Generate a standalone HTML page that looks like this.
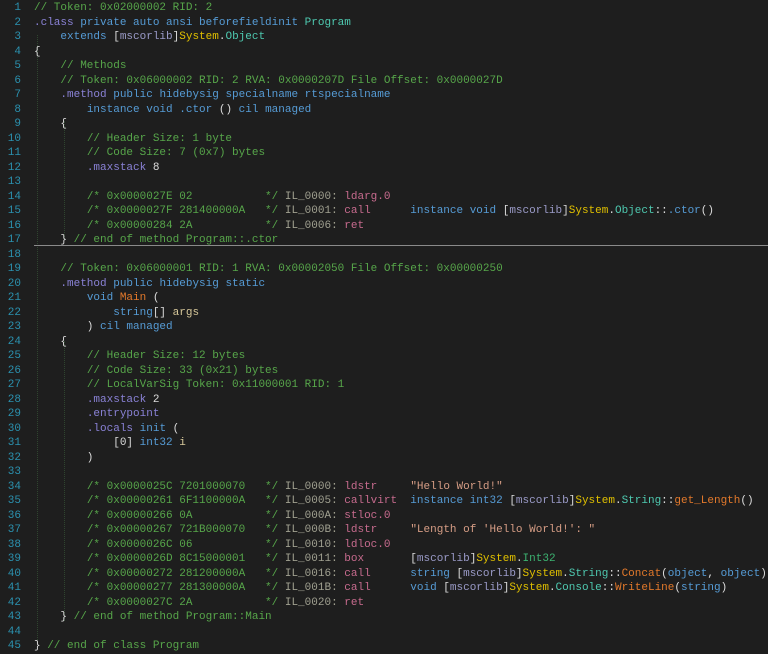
<!DOCTYPE html>
<html><head><style>
body{margin:0;background:#1e1e1e;width:768px;height:652px;overflow:hidden;position:relative;font-family:"Liberation Mono",monospace;font-size:11px;}
.l{position:absolute;left:0;height:14.5px;line-height:14.5px;white-space:pre;color:#dcdcdc;}
.n{display:inline-block;width:21px;text-align:right;color:#2b91af;margin-right:13px;}
.c{color:#57a64a}.d{color:#8a82d6}.k{color:#569cd6}.m{color:#9b9bc8}.s{color:#e0c000}.t{color:#4ec9b0}
.o{color:#c76b8e}.g{color:#a0a090}.f{color:#e3792b}.q{color:#d69d85}.v{color:#3cb371}.p{color:#d7c89a}.u{color:#b5cea8}
.gl{position:absolute;border-left:1px dotted #2f452f;}
</style></head><body>
<div class="gl" style="left:37px;top:35px;height:605px"></div>
<div class="gl" style="left:64px;top:121px;height:118px"></div>
<div class="gl" style="left:64px;top:341px;height:280px"></div>
<div style="position:absolute;left:34px;top:245px;width:734px;height:1px;background:#8a8a8a"></div>
<div id="c"></div>
<script>
const L=[
'<span class="c">// Token: 0x02000002 RID: 2</span>',
'<span class="d">.class</span> <span class="k">private auto ansi beforefieldinit</span> <span class="t">Program</span>',
'    <span class="k">extends</span> [<span class="m">mscorlib</span>]<span class="s">System</span>.<span class="t">Object</span>',
'{',
'    <span class="c">// Methods</span>',
'    <span class="c">// Token: 0x06000002 RID: 2 RVA: 0x0000207D File Offset: 0x0000027D</span>',
'    <span class="d">.method</span> <span class="k">public hidebysig specialname rtspecialname</span>',
'        <span class="k">instance void</span> <span class="k">.ctor</span> () <span class="k">cil managed</span>',
'    {',
'        <span class="c">// Header Size: 1 byte</span>',
'        <span class="c">// Code Size: 7 (0x7) bytes</span>',
'        <span class="d">.maxstack</span> 8',
'',
'        <span class="c">/* 0x0000027E 02           */</span> <span class="g">IL_0000:</span> <span class="o">ldarg.0</span>',
'        <span class="c">/* 0x0000027F 281400000A   */</span> <span class="g">IL_0001:</span> <span class="o">call</span>      <span class="k">instance void</span> [<span class="m">mscorlib</span>]<span class="s">System</span>.<span class="t">Object</span>::<span class="k">.ctor</span>()',
'        <span class="c">/* 0x00000284 2A           */</span> <span class="g">IL_0006:</span> <span class="o">ret</span>',
'    } <span class="c">// end of method Program::.ctor</span>',
'',
'    <span class="c">// Token: 0x06000001 RID: 1 RVA: 0x00002050 File Offset: 0x00000250</span>',
'    <span class="d">.method</span> <span class="k">public hidebysig static</span>',
'        <span class="k">void</span> <span class="f">Main</span> (',
'            <span class="k">string</span>[] <span class="p">args</span>',
'        ) <span class="k">cil managed</span>',
'    {',
'        <span class="c">// Header Size: 12 bytes</span>',
'        <span class="c">// Code Size: 33 (0x21) bytes</span>',
'        <span class="c">// LocalVarSig Token: 0x11000001 RID: 1</span>',
'        <span class="d">.maxstack</span> 2',
'        <span class="d">.entrypoint</span>',
'        <span class="d">.locals</span> <span class="k">init</span> (',
'            [0] <span class="k">int32</span> <span class="p">i</span>',
'        )',
'',
'        <span class="c">/* 0x0000025C 7201000070   */</span> <span class="g">IL_0000:</span> <span class="o">ldstr</span>     <span class="q">"Hello World!"</span>',
'        <span class="c">/* 0x00000261 6F1100000A   */</span> <span class="g">IL_0005:</span> <span class="o">callvirt</span>  <span class="k">instance int32</span> [<span class="m">mscorlib</span>]<span class="s">System</span>.<span class="t">String</span>::<span class="f">get_Length</span>()',
'        <span class="c">/* 0x00000266 0A           */</span> <span class="g">IL_000A:</span> <span class="o">stloc.0</span>',
'        <span class="c">/* 0x00000267 721B000070   */</span> <span class="g">IL_000B:</span> <span class="o">ldstr</span>     <span class="q">"Length of \'Hello World!\': "</span>',
'        <span class="c">/* 0x0000026C 06           */</span> <span class="g">IL_0010:</span> <span class="o">ldloc.0</span>',
'        <span class="c">/* 0x0000026D 8C15000001   */</span> <span class="g">IL_0011:</span> <span class="o">box</span>       [<span class="m">mscorlib</span>]<span class="s">System</span>.<span class="v">Int32</span>',
'        <span class="c">/* 0x00000272 281200000A   */</span> <span class="g">IL_0016:</span> <span class="o">call</span>      <span class="k">string</span> [<span class="m">mscorlib</span>]<span class="s">System</span>.<span class="t">String</span>::<span class="f">Concat</span>(<span class="k">object</span>, <span class="k">object</span>)',
'        <span class="c">/* 0x00000277 281300000A   */</span> <span class="g">IL_001B:</span> <span class="o">call</span>      <span class="k">void</span> [<span class="m">mscorlib</span>]<span class="s">System</span>.<span class="t">Console</span>::<span class="f">WriteLine</span>(<span class="k">string</span>)',
'        <span class="c">/* 0x0000027C 2A           */</span> <span class="g">IL_0020:</span> <span class="o">ret</span>',
'    } <span class="c">// end of method Program::Main</span>',
'',
'} <span class="c">// end of class Program</span>'
];
let h='';L.forEach((s,i)=>{h+='<div class="l" style="top:'+(i*14.5+1)+'px"><span class="n">'+(i+1)+'</span>'+s+'</div>';});
document.getElementById('c').innerHTML=h;
</script>
</body></html>
